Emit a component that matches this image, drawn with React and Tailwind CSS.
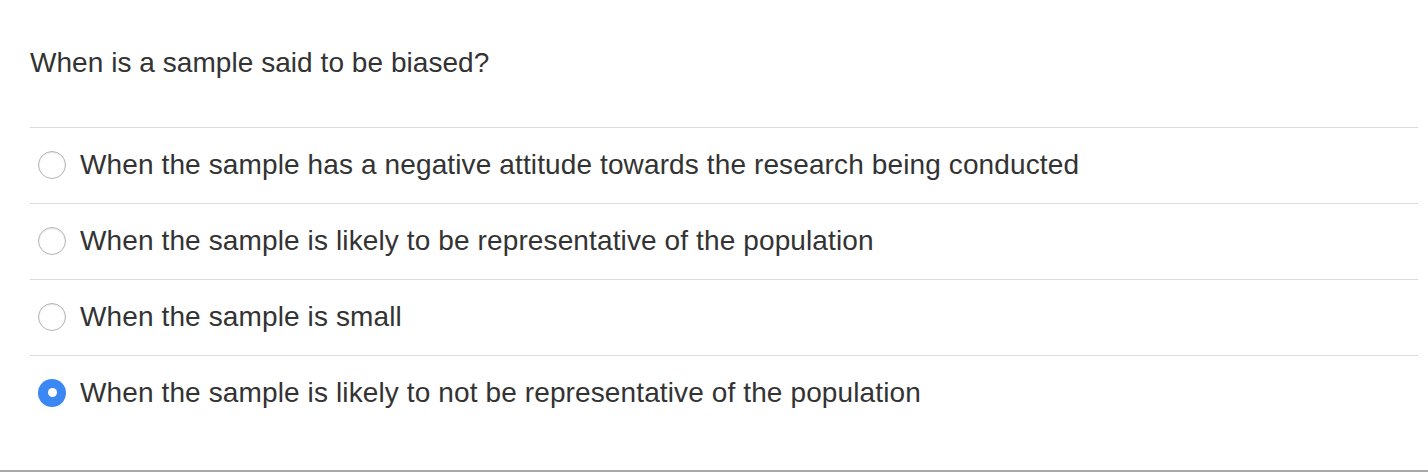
import React from 'react';

const options = [
  'When the sample has a negative attitude towards the research being conducted',
  'When the sample is likely to be representative of the population',
  'When the sample is small',
  'When the sample is likely to not be representative of the population',
];

const Radio = ({ checked }) =>
  checked ? (
    <span className="flex h-[28px] w-[28px] shrink-0 items-center justify-center rounded-full bg-[#3b88f5]">
      <span className="h-[9px] w-[9px] rounded-full bg-white" />
    </span>
  ) : (
    <span className="h-[28px] w-[28px] shrink-0 rounded-full border border-[#b4b4b4] bg-white shadow-[inset_0_1px_2px_rgba(0,0,0,0.1)]" />
  );

const App = () => {
  const selected = 3;

  return (
    <div className="h-[472px] w-full bg-white font-['Liberation_Sans',Arial,sans-serif] text-[#333333]">
      <div className="border-b-2 border-[#a8a8a8] pb-[39px] pl-[30px] pr-[10px]">
        <div className="flex h-[127px] items-center pb-[1px] text-[28px] tracking-[0.05px]">
          When is a sample said to be biased?
        </div>
        {options.map((option, index) => (
          <label
            key={index}
            className="flex h-[76px] cursor-pointer items-center gap-[14px] border-t border-[#dcdcdc] pb-[2px] pl-[8px] text-[28px]"
          >
            <Radio checked={index === selected} />
            <span className="tracking-[0.12px]">{option}</span>
          </label>
        ))}
      </div>
    </div>
  );
};

export default App;
